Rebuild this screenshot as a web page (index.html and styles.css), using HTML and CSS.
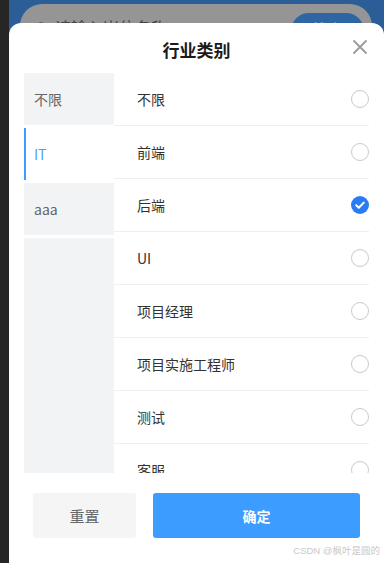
FILE: index.html
```html
<!DOCTYPE html>
<html lang="zh">
<head>
<meta charset="utf-8">
<link rel="stylesheet" href="styles.css">
</head>
<body>
<div class="screen">
  <div class="side-strip"></div>
  <div class="app">
    <div class="search-bar">
      <div class="search-input">
        <svg class="search-icon" viewBox="0 0 20 20" width="16" height="16"><circle cx="8.5" cy="8.5" r="6" fill="none" stroke="#4a4a4a" stroke-width="1.8"/><path d="M13 13l4.5 4.5" stroke="#4a4a4a" stroke-width="1.8" stroke-linecap="round"/></svg>
        <span class="search-placeholder">请输入岗位名称</span>
        <span class="search-btn">搜索</span>
      </div>
    </div>
  </div>

  <div class="popup">
    <div class="popup-header">
      <span class="popup-title">行业类别</span>
      <svg class="close" viewBox="0 0 16 16" width="16" height="16"><path d="M2 2l12 12M14 2L2 14" stroke="#9a9a9a" stroke-width="1.8" stroke-linecap="round"/></svg>
    </div>
    <div class="popup-body">
      <div class="sidebar">
        <div class="side-item">不限</div>
        <div class="side-item active">IT</div>
        <div class="side-item">aaa</div>
        <div class="side-filler"></div>
      </div>
      <div class="options">
        <div class="option"><span>不限</span><i class="radio"></i></div>
        <div class="option"><span>前端</span><i class="radio"></i></div>
        <div class="option"><span>后端</span><i class="radio checked"><svg viewBox="0 0 18 18" width="18" height="18"><path d="M5.2 9.3l2.6 2.5 5-5.2" fill="none" stroke="#fff" stroke-width="2" stroke-linecap="round" stroke-linejoin="round"/></svg></i></div>
        <div class="option"><span>UI</span><i class="radio"></i></div>
        <div class="option"><span>项目经理</span><i class="radio"></i></div>
        <div class="option"><span>项目实施工程师</span><i class="radio"></i></div>
        <div class="option"><span>测试</span><i class="radio"></i></div>
        <div class="option"><span>客服</span><i class="radio"></i></div>
      </div>
    </div>
    <div class="popup-footer">
      <button class="btn btn-reset">重置</button>
      <button class="btn btn-confirm">确定</button>
    </div>
    <div class="watermark">CSDN @枫叶是圆的</div>
  </div>
</div>
</body>
</html>
```

FILE: styles.css
```css
* { box-sizing: border-box; }
html, body { margin: 0; padding: 0; }
body {
  font-family: "Noto Sans CJK SC", "Noto Sans", sans-serif;
  background: #2b5e97;
}
.screen {
  position: relative;
  width: 384px;
  height: 563px;
  overflow: hidden;
  display: flex;
  background: #2b5e97;
}
.side-strip {
  width: 9px;
  height: 100%;
  background: #262626;
  flex: none;
}
.app {
  flex: 1;
  background: #2b5e97;
}
.search-bar {
  padding: 4px 12px 0 11px;
}
.search-input {
  height: 48px;
  border-radius: 22px;
  background: #959595;
  display: flex;
  align-items: flex-start;
  padding: 13px 8px 0 14px;
}
.search-icon { margin-top: 4px; flex: none; }
.search-placeholder {
  margin-left: 5px;
  font-size: 16px;
  line-height: 20px;
  color: #444;
  flex: 1;
}
.search-btn {
  margin-top: -4px;
  width: 73px;
  height: 36px;
  border-radius: 18px;
  background: #2e66a4;
  color: #a9b4c4;
  font-size: 15px;
  line-height: 32px;
  text-align: center;
}

.popup {
  position: absolute;
  left: 9px;
  top: 23px;
  right: 0;
  bottom: 0;
  background: #fff;
  border-radius: 12px 12px 0 0;
  display: flex;
  flex-direction: column;
}
.popup-header {
  position: relative;
  height: 50px;
  display: flex;
  align-items: center;
  justify-content: center;
}
.popup-title {
  font-size: 17px;
  font-weight: 700;
  color: #1a1a1a;
  margin-top: 2px;
}
.close {
  position: absolute;
  right: 16px;
  top: 16px;
}
.popup-body {
  height: 400px;
  display: flex;
  padding: 0 15px;
}
.sidebar {
  width: 90px;
  flex: none;
  display: flex;
  flex-direction: column;
}
.side-item {
  height: 52px;
  margin-bottom: 3px;
  background: #f2f3f5;
  color: #646566;
  font-size: 14px;
  line-height: 52px;
  padding-left: 10px;
}
.side-item.active {
  background: #fff;
  color: #4b9ffb;
  border-left: 2px solid #3c9cff;
  padding-left: 8px;
}
.side-filler {
  flex: 1;
  background: #f2f3f5;
}
.options {
  flex: 1;
  overflow: hidden;
}
.option {
  height: 53px;
  border-bottom: 1px solid #eeeff1;
  display: flex;
  align-items: center;
  justify-content: space-between;
  padding-left: 23px;
  font-size: 14px;
  color: #323233;
}
.radio {
  width: 18px;
  height: 18px;
  border-radius: 50%;
  border: 1px solid #c8c9cc;
  display: block;
}
.radio.checked {
  border: none;
  background: #2a7bf5;
}
.radio svg { display: block; }
.popup-footer {
  display: flex;
  gap: 17px;
  padding: 20px 24px 0 24px;
}
.btn {
  height: 45px;
  border: none;
  border-radius: 3px;
  font-family: inherit;
  font-size: 15px;
}
.btn-reset {
  width: 103px;
  background: #f5f5f5;
  color: #666;
}
.btn-confirm {
  width: 207px;
  background: #3c9cff;
  color: #fff;
  font-weight: 700;
  font-size: 14px;
}
.watermark {
  position: absolute;
  right: 4px;
  bottom: 6px;
  font-size: 9.5px;
  color: #c9c9c9;
  font-family: "Liberation Sans", "Noto Sans CJK SC", sans-serif;
}
```
